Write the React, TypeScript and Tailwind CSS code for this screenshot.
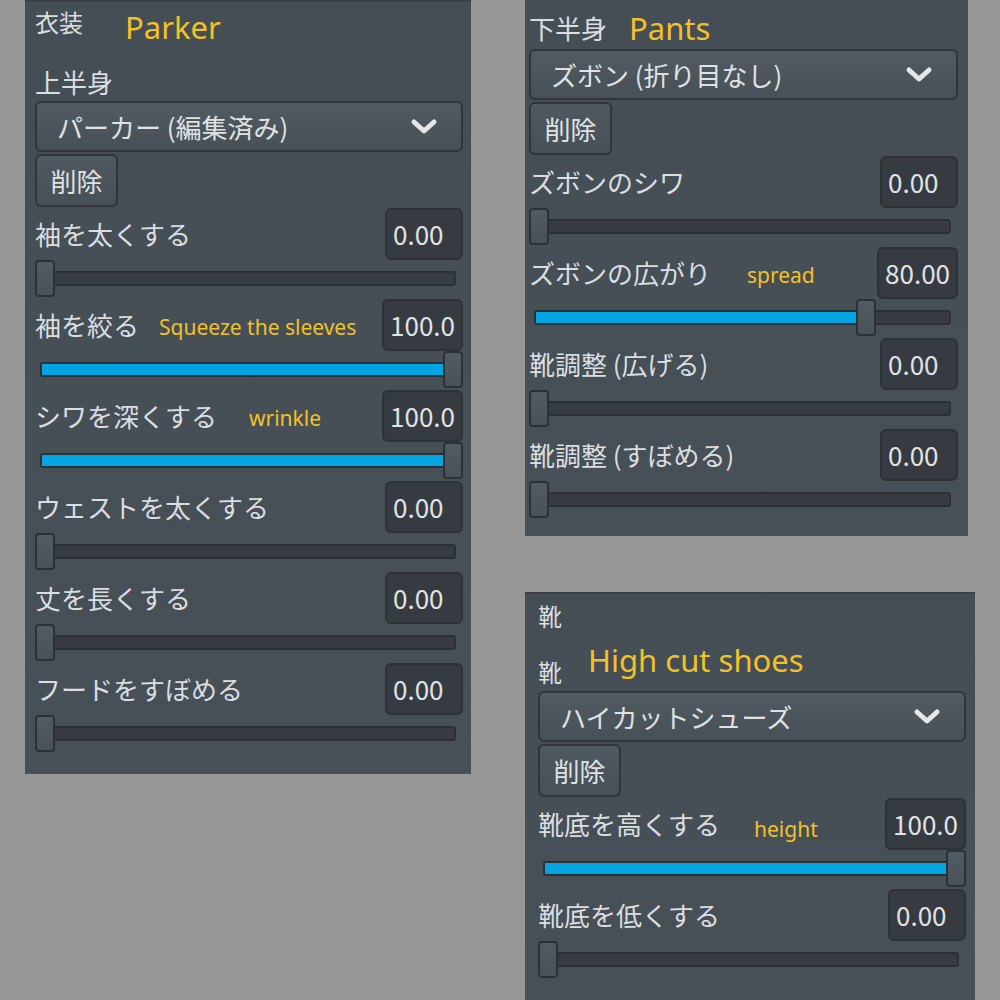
import React from 'react';

const font = { fontFamily: '"Noto Sans CJK JP", "Noto Sans", sans-serif' };
const latin = { fontFamily: '"Noto Sans", "Liberation Sans", sans-serif' };

const Chevron: React.FC = () => (
  <svg width="30" height="18" viewBox="0 0 30 18" className="shrink-0">
    <polyline points="5,4 15,13 25,4" fill="none" stroke="#e4e7ea" strokeWidth="5" strokeLinecap="round" strokeLinejoin="round" />
  </svg>
);

const Dropdown: React.FC<{ text: string }> = ({ text }) => (
  <div className="flex items-center h-[51px] rounded-md border-2 border-[#2f353a] bg-gradient-to-b from-[#535b62] to-[#475057] pl-[20px] pr-[22px]">
    <span className="text-[26px] text-[#dfe2e5] leading-none">{text}</span>
    <div className="ml-auto"><Chevron /></div>
  </div>
);

const DeleteButton: React.FC = () => (
  <div className="mt-[2px] flex items-center justify-center w-[83px] h-[53px] rounded-md border-2 border-[#2f353a] bg-gradient-to-b from-[#515960] to-[#465056] text-[26px] text-[#dfe2e5] leading-none">
    削除
  </div>
);

const Slider: React.FC<{ pct: number }> = ({ pct }) => (
  <div className="relative h-[38px]">
    <div className="absolute left-[5px] right-[7px] top-[11px] h-[15px] rounded-[3px] border-2 border-[#2b3035] bg-[#373c42]" />
    {pct > 0 && (
      <div
        className="absolute left-[7px] top-[13px] h-[11px] bg-[#02a5e2]"
        style={{ width: `calc((100% - 20px) * ${pct / 100} - 7px)` }}
      />
    )}
    <div
      className="absolute top-0 w-[20px] h-[37px] rounded-[4px] border-2 border-[#2c3136] bg-gradient-to-b from-[#535b62] to-[#4a5259]"
      style={{ left: `calc((100% - 20px) * ${pct / 100})` }}
    />
  </div>
);

type RowProps = { label: string; value: string; pct: number; note?: string; noteClass?: string };

const Row: React.FC<RowProps> = ({ label, value, pct, note, noteClass }) => (
  <>
    <div className="flex items-center h-[52px] mt-[1px]">
      <span className="text-[26px] text-[#dadee1] leading-none whitespace-nowrap">{label}</span>
      {note && (
        <span className={`mt-[4px] text-[21px] text-[#f3c127] leading-none whitespace-nowrap ${noteClass ?? ''}`} style={latin}>
          {note}
        </span>
      )}
      <div className="ml-auto flex items-center h-[52px] min-w-[78px] px-[6px] rounded-md border-2 border-[#2d3237] bg-[#363b41] text-[26px] text-[#e0e3e6] leading-none">
        {value}
      </div>
    </div>
    <Slider pct={pct} />
  </>
);

const Title: React.FC<{ text: string; className?: string }> = ({ text, className }) => (
  <span className={`text-[31px] text-[#f3c127] leading-none ${className ?? ''}`} style={latin}>
    {text}
  </span>
);

export default function App() {
  return (
    <div className="w-[1000px] h-[1000px] bg-[#979797] overflow-hidden flex" style={font}>
      {/* Upper body */}
      <div className="ml-[25px] w-[446px] h-[774px] bg-gradient-to-b from-[#464e55] to-[#475057] border-t-2 border-[#3a4046] pl-[10px] pr-[8px] flex flex-col">
        <div className="flex items-start h-[46px] pt-[8px]">
          <span className="text-[24px] text-[#dadee1] leading-none">衣装</span>
          <Title text="Parker" className="ml-[42px] mt-[2px]" />
        </div>
        <div className="flex items-end h-[53px] pb-[6px]">
          <span className="text-[26px] text-[#dadee1] leading-none">上半身</span>
        </div>
        <Dropdown text="パーカー (編集済み)" />
        <DeleteButton />
        <Row label="袖を太くする" value="0.00" pct={0} />
        <Row label="袖を絞る" value="100.0" pct={100} note="Squeeze the sleeves" noteClass="ml-[20px]" />
        <Row label="シワを深くする" value="100.0" pct={100} note="wrinkle" noteClass="ml-[32px]" />
        <Row label="ウェストを太くする" value="0.00" pct={0} />
        <Row label="丈を長くする" value="0.00" pct={0} />
        <Row label="フードをすぼめる" value="0.00" pct={0} />
      </div>

      <div className="ml-[54px] flex flex-col">
        {/* Lower body */}
        <div className="w-[443px] h-[536px] bg-gradient-to-b from-[#464e55] to-[#475057] pl-[4px] pr-[10px] flex flex-col">
          <div className="flex items-center h-[49px] pt-[7px]">
            <span className="text-[26px] text-[#dadee1] leading-none">下半身</span>
            <Title text="Pants" className="ml-[22px]" />
          </div>
          <Dropdown text="ズボン (折り目なし)" />
          <DeleteButton />
          <Row label="ズボンのシワ" value="0.00" pct={0} />
          <Row label="ズボンの広がり" value="80.00" pct={80} note="spread" noteClass="ml-[36px]" />
          <Row label="靴調整 (広げる)" value="0.00" pct={0} />
          <Row label="靴調整 (すぼめる)" value="0.00" pct={0} />
        </div>

        {/* Shoes */}
        <div className="mt-[56px] w-[450px] flex-1 bg-gradient-to-b from-[#464e55] to-[#475057] border-t-2 border-[#3a4046] pl-[13px] pr-[9px] flex flex-col">
          <div className="flex items-center h-[44px]">
            <span className="text-[24px] text-[#dadee1] leading-none">靴</span>
          </div>
          <div className="flex items-end h-[53px] pb-[7px]">
            <span className="text-[24px] text-[#dadee1] leading-none">靴</span>
            <Title text="High cut shoes" className="ml-[26px] mb-[8px]" />
          </div>
          <Dropdown text="ハイカットシューズ" />
          <DeleteButton />
          <Row label="靴底を高くする" value="100.0" pct={100} note="height" noteClass="ml-[34px] mt-[10px]" />
          <Row label="靴底を低くする" value="0.00" pct={0} />
        </div>
      </div>
    </div>
  );
}
